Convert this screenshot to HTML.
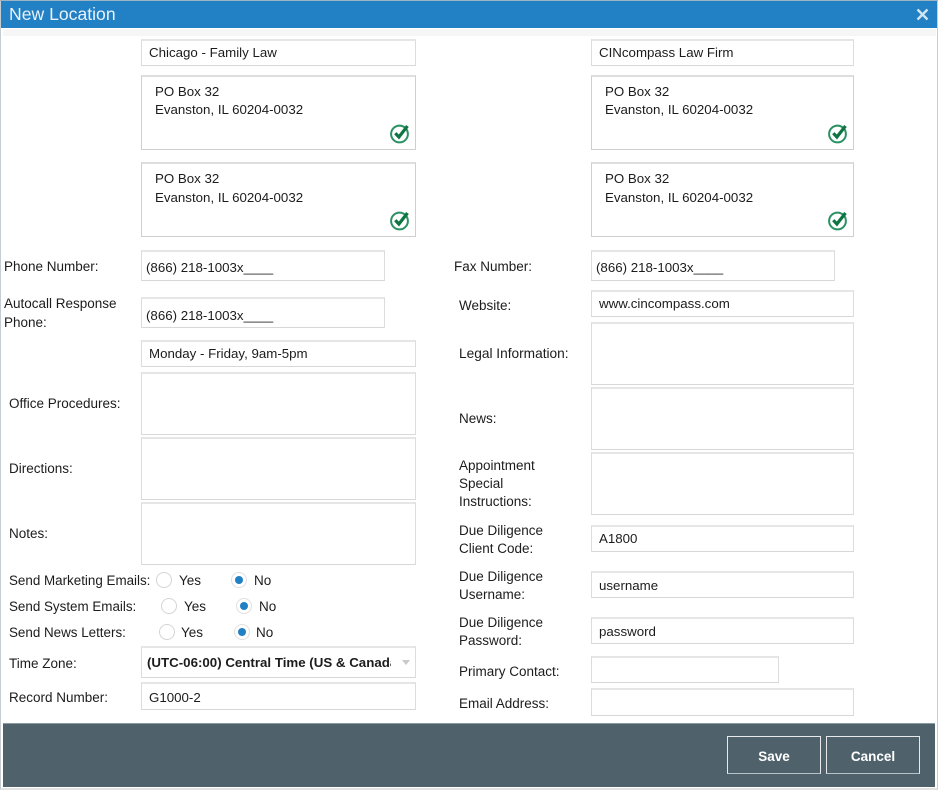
<!DOCTYPE html>
<html><head><meta charset="utf-8"><style>
html,body{margin:0;padding:0;width:938px;height:790px;overflow:hidden;background:#fff}
body{position:relative;font-family:"Liberation Sans",sans-serif;font-size:13.5px;color:#1c1c1c}
.a{position:absolute;box-sizing:border-box}
.t{position:absolute;white-space:nowrap;line-height:18px;margin-top:1px}
.b{position:absolute;box-sizing:border-box;border:1px solid #dcdcdc;border-top:2px solid #e6e6e6;border-bottom:1px solid #d8d8d8;background:#fff;white-space:pre;line-height:18px;font-size:13.3px}
.p{border-color:#cfcfcf;border-top-color:#dedede}
.l2{line-height:19px}
.r{position:absolute;box-sizing:border-box;width:16px;height:16px;border-radius:50%;border:1px solid #d4d4d4;background:#fff}
.r.on{border-color:#e0e0e0}
.r.on:after{content:"";position:absolute;left:3px;top:3px;width:8px;height:8px;border-radius:50%;background:#2280c5}
.c{position:absolute}
.btn{position:absolute;box-sizing:border-box;border:1px solid #e6eaec;border-bottom-color:#b8c2c6;color:#fff;font-weight:bold;font-size:13.5px;text-align:center;line-height:39px;height:38px;width:94px}
</style></head><body>
<div class="a" style="left:0;top:0;width:938px;height:790px;border:1px solid #c4cdd2;border-top:0;border-bottom:2px solid #e2e2e2"></div>
<div class="a" style="left:1px;top:1px;width:936px;height:27px;background:#2280c5"></div>
<div class="a" style="left:0;top:0;width:938px;height:1px;background:#9fb4c2"></div>
<div class="t" style="left:9px;top:1px;font-size:17.6px;line-height:24px;color:#e9f2f8">New Location</div>
<svg class="c" style="left:916px;top:8px" width="13" height="13" viewBox="0 0 13 13"><path d="M1.5 1.5L11.5 11.5M11.5 1.5L1.5 11.5" stroke="#d3e5f2" stroke-width="2.4" fill="none"/></svg>
<div class="a" style="left:3px;top:29px;height:7px;background:#f6f6f6;width:933px"></div>

<div class="b" style="left:141px;top:39px;width:275px;height:27px;padding:3px 0 0 7px">Chicago - Family Law</div>
<div class="b p" style="left:141px;top:75px;width:275px;height:75px;padding:6px 0 0 13px">PO Box 32
Evanston, IL 60204-0032</div>
<div class="b p l2" style="left:141px;top:162px;width:275px;height:75px;padding:5px 0 0 13px">PO Box 32
Evanston, IL 60204-0032</div>
<div class="b" style="left:591px;top:39px;width:263px;height:27px;padding:3px 0 0 7px">CINcompass Law Firm</div>
<div class="b p" style="left:591px;top:75px;width:263px;height:75px;padding:6px 0 0 13px">PO Box 32
Evanston, IL 60204-0032</div>
<div class="b p l2" style="left:591px;top:162px;width:263px;height:75px;padding:5px 0 0 13px">PO Box 32
Evanston, IL 60204-0032</div>

<svg class="c" style="left:389px;top:123px" width="22" height="22" viewBox="0 0 22 22"><circle cx="10.5" cy="11" r="8.4" fill="none" stroke="#2a9163" stroke-width="2"/><path d="M6.3 10.2L9.9 14L18.5 3" fill="none" stroke="#0f7443" stroke-width="3.2"/></svg>
<svg class="c" style="left:389px;top:210px" width="22" height="22" viewBox="0 0 22 22"><circle cx="10.5" cy="11" r="8.4" fill="none" stroke="#2a9163" stroke-width="2"/><path d="M6.3 10.2L9.9 14L18.5 3" fill="none" stroke="#0f7443" stroke-width="3.2"/></svg>
<svg class="c" style="left:827px;top:123px" width="22" height="22" viewBox="0 0 22 22"><circle cx="10.5" cy="11" r="8.4" fill="none" stroke="#2a9163" stroke-width="2"/><path d="M6.3 10.2L9.9 14L18.5 3" fill="none" stroke="#0f7443" stroke-width="3.2"/></svg>
<svg class="c" style="left:827px;top:210px" width="22" height="22" viewBox="0 0 22 22"><circle cx="10.5" cy="11" r="8.4" fill="none" stroke="#2a9163" stroke-width="2"/><path d="M6.3 10.2L9.9 14L18.5 3" fill="none" stroke="#0f7443" stroke-width="3.2"/></svg>

<div class="t" style="left:4px;top:257px">Phone Number:</div>
<div class="b" style="left:141px;top:250px;width:244px;height:31px;padding:7px 0 0 4px">(866) 218-1003x____</div>
<div class="t" style="left:454px;top:257px">Fax Number:</div>
<div class="b" style="left:591px;top:250px;width:244px;height:31px;padding:7px 0 0 4px">(866) 218-1003x____</div>
<div class="t" style="left:4px;top:294px">Autocall Response</div>
<div class="t" style="left:4px;top:313px">Phone:</div>
<div class="b" style="left:141px;top:297px;width:244px;height:31px;padding:8px 0 0 4px">(866) 218-1003x____</div>
<div class="t" style="left:459px;top:296px">Website:</div>
<div class="b" style="left:591px;top:290px;width:263px;height:27px;padding:3px 0 0 7px">www.cincompass.com</div>
<div class="b" style="left:141px;top:340px;width:275px;height:27px;padding:3px 0 0 7px">Monday - Friday, 9am-5pm</div>
<div class="t" style="left:459px;top:344px;font-size:13.7px">Legal Information:</div>
<div class="b" style="left:591px;top:322px;width:263px;height:63px"></div>
<div class="t" style="left:9px;top:394px">Office Procedures:</div>
<div class="b" style="left:141px;top:372px;width:275px;height:63px"></div>
<div class="t" style="left:459px;top:409px">News:</div>
<div class="b" style="left:591px;top:387px;width:263px;height:63px"></div>
<div class="t" style="left:9px;top:459px">Directions:</div>
<div class="b" style="left:141px;top:437px;width:275px;height:63px"></div>
<div class="t" style="left:459px;top:456px">Appointment</div>
<div class="t" style="left:459px;top:474px">Special</div>
<div class="t" style="left:459px;top:492px">Instructions:</div>
<div class="b" style="left:591px;top:452px;width:263px;height:63px"></div>
<div class="t" style="left:9px;top:524px">Notes:</div>
<div class="b" style="left:141px;top:502px;width:275px;height:63px"></div>
<div class="t" style="left:459px;top:521px">Due Diligence</div>
<div class="t" style="left:459px;top:539px">Client Code:</div>
<div class="b" style="left:591px;top:525px;width:263px;height:27px;padding:3px 0 0 7px">A1800</div>
<div class="t" style="left:459px;top:567px">Due Diligence</div>
<div class="t" style="left:459px;top:585px">Username:</div>
<div class="b" style="left:591px;top:571px;width:263px;height:27px;padding:4px 0 0 7px">username</div>
<div class="t" style="left:459px;top:613px">Due Diligence</div>
<div class="t" style="left:459px;top:631px">Password:</div>
<div class="b" style="left:591px;top:617px;width:263px;height:27px;padding:4px 0 0 7px">password</div>
<div class="t" style="left:459px;top:662px">Primary Contact:</div>
<div class="b" style="left:591px;top:656px;width:188px;height:27px"></div>
<div class="t" style="left:459px;top:694px">Email Address:</div>
<div class="b" style="left:591px;top:688px;width:263px;height:28px"></div>

<div class="t" style="left:9px;top:571px;font-size:13.4px">Send Marketing Emails:</div>
<div class="r" style="left:156px;top:572px"></div><div class="t" style="left:179px;top:571px">Yes</div>
<div class="r on" style="left:231px;top:572px"></div><div class="t" style="left:254px;top:571px">No</div>
<div class="t" style="left:9px;top:597px;font-size:13.4px">Send System Emails:</div>
<div class="r" style="left:161px;top:598px"></div><div class="t" style="left:184px;top:597px">Yes</div>
<div class="r on" style="left:236px;top:598px"></div><div class="t" style="left:259px;top:597px">No</div>
<div class="t" style="left:9px;top:623px;font-size:13.4px">Send News Letters:</div>
<div class="r" style="left:159px;top:624px"></div><div class="t" style="left:181px;top:623px">Yes</div>
<div class="r on" style="left:234px;top:624px"></div><div class="t" style="left:256px;top:623px">No</div>
<div class="t" style="left:9px;top:654px">Time Zone:</div>
<div class="b" style="left:141px;top:646px;width:275px;height:32px;padding:6px 0 0 5px;font-weight:bold;font-size:13.3px;overflow:hidden"><span style="display:block;width:244px;overflow:hidden">(UTC-06:00) Central Time (US &amp; Canada)</span></div>
<div class="a" style="left:402px;top:660px;width:0;height:0;border-left:4px solid transparent;border-right:4px solid transparent;border-top:5px solid #c9c9c9"></div>
<div class="t" style="left:9px;top:688px">Record Number:</div>
<div class="b" style="left:141px;top:682px;width:275px;height:28px;padding:5px 0 0 7px">G1000-2</div>

<div class="a" style="left:3px;top:723px;width:932px;height:64px;background:#4f626b;border-top:1px solid #8a9aa1"></div>
<div class="btn" style="left:727px;top:736px">Save</div>
<div class="btn" style="left:826px;top:736px">Cancel</div>
</body></html>
